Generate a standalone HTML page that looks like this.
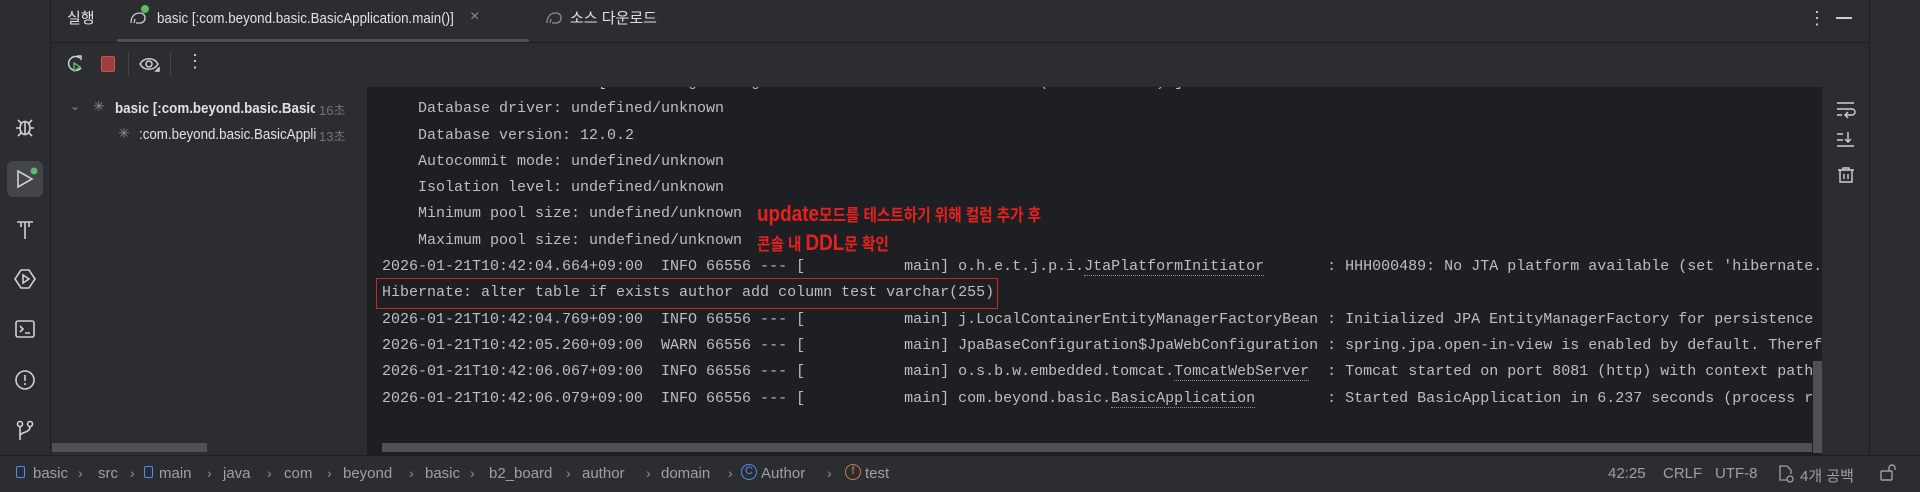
<!DOCTYPE html>
<html><head><meta charset="utf-8"><style>
*{margin:0;padding:0;box-sizing:border-box}
body{width:1920px;height:492px;overflow:hidden;background:#2b2d30;position:relative;font-family:"Liberation Sans","Noto Sans CJK KR",sans-serif;color:#dfe1e5}
.a{position:absolute;white-space:nowrap}
.ui{font-size:15px;line-height:18px}
.sx{transform:scaleX(0.89);transform-origin:left}
.con{position:absolute;left:367px;top:87px;width:1455px;height:368px;background:#1e1f22;overflow:hidden}
pre{position:absolute;left:15px;top:-17px;font-family:"Liberation Mono",monospace;font-size:15px;line-height:26.3px;color:#bcbec4}
.u{border-bottom:1px dotted #8a8d92}
.g{color:#8c8f95}
.sep{color:#8c8f95;font-size:14px}
</style></head><body>
<div class="a" style="left:50px;top:0;width:1px;height:455px;background:#1e1f22"></div>
<div class="a" style="left:0;top:455px;width:1920px;height:1px;background:#1e1f22"></div>
<div class="a" style="left:1869px;top:0;width:1px;height:455px;background:#1e1f22"></div>
<div class="a" style="top:42px;width:1818px;height:1px;background:#1e1f22;left:51px"></div>
<div class="a" style="left:7px;top:161px;width:36px;height:36px;background:#43454a;border-radius:6px"></div>
<svg class="a" style="left:0;top:110px" width="50" height="340" fill="none" stroke="#ced0d6" stroke-width="1.6">
 <g transform="translate(15,7)"><ellipse cx="10" cy="11" rx="5" ry="6.5"/><path d="M5 11H1M15 11h4M6 6L3 3M14 6l3-3M6 16l-3 3M14 16l3 3M10 5v12"/></g>
 <g transform="translate(16,59)"><path d="M2 2v16l14-8z"/></g>
 <circle cx="34" cy="61" r="3.5" fill="#5fb865" stroke="none"/>
 <g transform="translate(15,109)"><path d="M2 3h16M10 3v17M6 3v5M14 3v5"/></g>
 <g transform="translate(15,159)"><path d="M6 1h8l6 9-6 9H6L0 10z"/><path d="M8 6v8l6-4z"/></g>
 <g transform="translate(15,209)"><rect x="1" y="2" width="18" height="16" rx="2"/><path d="M5 7l3 3-3 3M10 14h5"/></g>
 <g transform="translate(15,260)"><circle cx="10" cy="10" r="9"/><path d="M10 5v6M10 13v2"/></g>
 <g transform="translate(15,310)"><circle cx="5" cy="4" r="2.5"/><circle cx="15" cy="4" r="2.5"/><path d="M5 7v13M15 7c0 6-10 5-10 9"/></g>
</svg>
<div class="a ui" style="left:67px;top:10px">실행</div>
<svg class="a" style="left:128px;top:7px" width="20" height="20" fill="none" stroke="#ced0d6" stroke-width="1.3"><path d="M3 16c0-6 3-10 9-10 3 0 5 2 5 5s-2 5-5 5H8M6 16l1-4"/></svg>
<div class="a" style="left:141px;top:5px;width:8px;height:8px;border-radius:50%;background:#5fb865"></div>
<div class="a ui sx" style="left:157px;top:10px">basic [:com.beyond.basic.BasicApplication.main()]</div>
<div class="a g" style="left:470px;top:8px;font-size:16px">×</div>
<div class="a" style="left:117px;top:39px;width:412px;height:3px;background:#4e5157;border-radius:2px"></div>
<svg class="a" style="left:544px;top:7px" width="20" height="20" fill="none" stroke="#8c8f95" stroke-width="1.3"><path d="M3 16c0-6 3-10 9-10 3 0 5 2 5 5s-2 5-5 5H8M6 16l1-4"/></svg>
<div class="a ui" style="left:570px;top:10px">소스 다운로드</div>
<div class="a" style="left:1808px;top:8px;font-size:18px;color:#ced0d6">⋮</div>
<div class="a" style="left:1836px;top:17px;width:16px;height:1.5px;background:#ced0d6"></div>
<svg class="a" style="left:66px;top:54px" width="20" height="20" fill="none" stroke-width="1.5"><path d="M14 4a7 7 0 1 0 1 10" stroke="#ced0d6"/><path d="M11 2h4v4" stroke="#ced0d6"/><path d="M8 9v8l6-4z" stroke="#5fb865"/></svg>
<div class="a" style="left:101px;top:56px;width:14px;height:16px;background:#9e3d3d;border:1.5px solid #c75450;border-radius:2px"></div>
<div class="a" style="left:128px;top:52px;width:1px;height:24px;background:#43454a"></div>
<svg class="a" style="left:139px;top:54px" width="22" height="20" fill="none" stroke="#ced0d6" stroke-width="1.5"><path d="M1 10c4-7 14-7 18 0-4 7-14 7-18 0z"/><circle cx="10" cy="10" r="3"/><path d="M17 17l3-3v3z" fill="#ced0d6"/></svg>
<div class="a" style="left:170px;top:52px;width:1px;height:24px;background:#43454a"></div>
<div class="a" style="left:186px;top:51px;font-size:18px;color:#ced0d6">⋮</div>
<div class="a" style="left:70px;top:99px;font-size:12px;color:#8c8f95">⌄</div>
<div class="a g" style="left:93px;top:98px;font-size:14px">✳</div>
<div class="a" style="left:115px;top:100px;width:200px;overflow:hidden;height:20px"><div class="ui sx" style="font-weight:bold">basic [:com.beyond.basic.BasicApplication]</div></div>
<div class="a" style="left:319px;top:100px;font-size:13px;color:#6f737a">16초</div>
<div class="a g" style="left:118px;top:125px;font-size:14px">✳</div>
<div class="a" style="left:139px;top:126px;width:177px;overflow:hidden;height:20px"><div class="ui sx">:com.beyond.basic.BasicApplication</div></div>
<div class="a" style="left:319px;top:126px;font-size:13px;color:#6f737a">13초</div>
<div class="a" style="left:52px;top:443px;width:155px;height:9px;background:#4e5157"></div>
<div class="con">
<pre>    Database user name: [connecting through datasource 'HikariDataSource (HikariPool-1)']
    Database driver: undefined/unknown
    Database version: 12.0.2
    Autocommit mode: undefined/unknown
    Isolation level: undefined/unknown
    Minimum pool size: undefined/unknown
    Maximum pool size: undefined/unknown
2026-01-21T10:42:04.664+09:00  INFO 66556 --- [           main] o.h.e.t.j.p.i.<span class="u">JtaPlatformInitiator</span>       : HHH000489: No JTA platform available (set 'hibernate.transaction.jta.platform' to enable JTA platform integration)
Hibernate: alter table if exists author add column test varchar(255)
2026-01-21T10:42:04.769+09:00  INFO 66556 --- [           main] j.LocalContainerEntityManagerFactoryBean : Initialized JPA EntityManagerFactory for persistence unit 'default'
2026-01-21T10:42:05.260+09:00  WARN 66556 --- [           main] JpaBaseConfiguration$JpaWebConfiguration : spring.jpa.open-in-view is enabled by default. Therefore
2026-01-21T10:42:06.067+09:00  INFO 66556 --- [           main] o.s.b.w.embedded.tomcat.<span class="u">TomcatWebServer</span>  : Tomcat started on port 8081 (http) with context path '/'
2026-01-21T10:42:06.079+09:00  INFO 66556 --- [           main] com.beyond.basic.<span class="u">BasicApplication</span>        : Started BasicApplication in 6.237 seconds (process running for 6.9)</pre>
<div class="a" style="left:9px;top:191px;width:622px;height:31px;border:1.5px solid #d02424"></div>
<div class="a" style="left:390px;top:113px;color:#e8201e;font-weight:bold;font-size:22px;line-height:27px;transform:scaleX(0.86);transform-origin:left">update<span style="font-size:17px">모드를 테스트하기 위해 컬럼 추가 후</span><br><span style="font-size:17px">콘솔 내 </span>DDL<span style="font-size:17px">문 확인</span></div>
<div class="a" style="left:15px;top:356px;width:1430px;height:9px;background:#4e5157"></div>
<div class="a" style="left:1446px;top:274px;width:9px;height:92px;background:#4e5157"></div>
</div>
<svg class="a" style="left:1834px;top:100px" width="24" height="90" fill="none" stroke="#ced0d6" stroke-width="1.4">
 <path d="M3 3h17M3 9h15a3 3 0 0 1 0 6h-6M14 12l-3 3 3 3M3 15h5"/>
 <path d="M3 34h6M3 40h6M3 46h17M14 32v10M11 39l3 3 3-3"/>
 <path d="M4 70h16M9 70v-2h6v2M6 70v12h12V70M10 74v5M14 74v5"/>
</svg>
<div class="a" style="left:0;top:456px;width:1920px;height:36px;font-size:15px;color:#9da0a8">
 <div class="a" style="left:16px;top:10px;width:9px;height:12px;border:1.5px solid #548af7;border-radius:2px"></div>
 <div class="a" style="left:33px;top:9px">basic</div><div class="a sep" style="left:78px;top:9px">›</div>
 <div class="a" style="left:98px;top:9px">src</div><div class="a sep" style="left:130px;top:9px">›</div>
 <div class="a" style="left:144px;top:10px;width:9px;height:12px;border:1.5px solid #548af7;border-radius:2px"></div>
 <div class="a" style="left:159px;top:9px">main</div><div class="a sep" style="left:207px;top:9px">›</div>
 <div class="a" style="left:223px;top:9px">java</div><div class="a sep" style="left:267px;top:9px">›</div>
 <div class="a" style="left:284px;top:9px">com</div><div class="a sep" style="left:327px;top:9px">›</div>
 <div class="a" style="left:343px;top:9px">beyond</div><div class="a sep" style="left:409px;top:9px">›</div>
 <div class="a" style="left:425px;top:9px">basic</div><div class="a sep" style="left:470px;top:9px">›</div>
 <div class="a" style="left:489px;top:9px">b2_board</div><div class="a sep" style="left:566px;top:9px">›</div>
 <div class="a" style="left:582px;top:9px">author</div><div class="a sep" style="left:646px;top:9px">›</div>
 <div class="a" style="left:661px;top:9px">domain</div><div class="a sep" style="left:728px;top:9px">›</div>
 <div class="a" style="left:741px;top:8px;width:16px;height:16px;border:1.5px solid #548af7;border-radius:50%;font-size:11px;color:#548af7;text-align:center;line-height:13px">C</div>
 <div class="a" style="left:761px;top:9px">Author</div><div class="a sep" style="left:827px;top:9px">›</div>
 <div class="a" style="left:845px;top:8px;width:16px;height:16px;border:1.5px solid #c77d55;border-radius:50%;font-size:11px;color:#c77d55;text-align:center;line-height:13px">f</div>
 <div class="a" style="left:865px;top:9px">test</div>
 <div class="a" style="left:1608px;top:9px">42:25</div>
 <div class="a" style="left:1663px;top:9px">CRLF</div>
 <div class="a" style="left:1715px;top:9px">UTF-8</div>
 <svg class="a" style="left:1777px;top:8px" width="18" height="20" fill="none" stroke="#9da0a8" stroke-width="1.3"><path d="M10 16H3V2h7l4 4v4"/><circle cx="13" cy="15" r="3"/></svg>
 <div class="a" style="left:1800px;top:9px">4개 공백</div>
 <svg class="a" style="left:1880px;top:8px" width="18" height="18" fill="none" stroke="#9da0a8" stroke-width="1.4"><rect x="1" y="7" width="11" height="9" rx="1"/><path d="M9 7V4a3 3 0 0 1 6 0v2"/></svg>
</div>
</body></html>
